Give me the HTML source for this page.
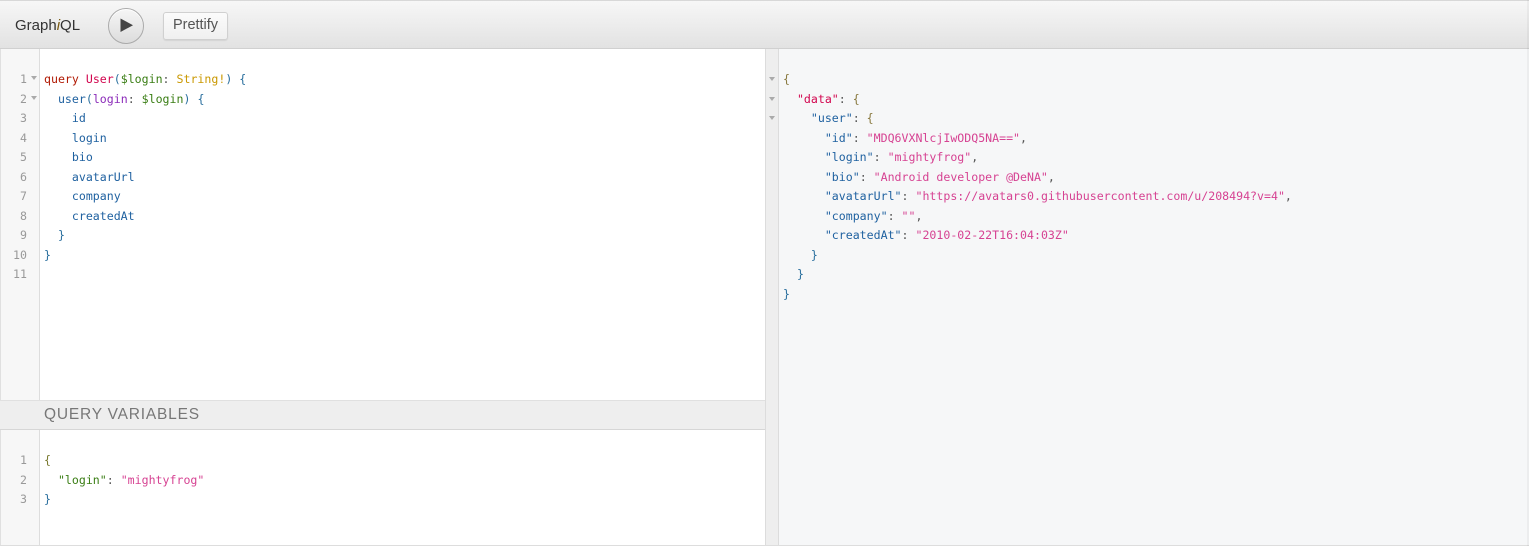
<!DOCTYPE html>
<html><head><meta charset="utf-8"><style>
html,body{margin:0;padding:0;width:1529px;height:546px;overflow:hidden;background:#fff}
body{position:relative;font-family:"DejaVu Sans Mono","Liberation Mono",monospace;font-size:11.58px}
div{position:absolute;box-sizing:border-box}
.l{white-space:pre;height:19px;line-height:19px;color:#555;margin-top:1px}
.n{color:#999;width:27px;text-align:right;height:19px;line-height:19px;left:0;margin-top:1px}
.a{width:0;height:0;border-left:3px solid transparent;border-right:3px solid transparent;border-top:4px solid #aaa}
.k{color:#b11a04}.d{color:#d2054e}.v{color:#397d13}.t{color:#ca9800}.at{color:#8b2bb9}.f{color:#1f61a0}.s{color:#d64292}.br{color:#2a6f9e}
</style></head><body>
<div style="left:0;top:0;width:1529px;height:49px;background:linear-gradient(#f7f7f7,#e2e2e2);border-top:1px solid #d8d8d8;border-bottom:1px solid #d0d0d0"></div>
<div style="left:15px;top:16px;font:15px/20px 'Liberation Sans',sans-serif;color:#333">Graph<i style="font-style:italic;color:#7a5a10">i</i>QL</div>
<div style="left:108px;top:8px;width:36px;height:36px;border-radius:50%;background:linear-gradient(#f6f6f6,#dcdcdc);border:1px solid #aaa;box-shadow:0 1px 0 #fff inset"></div>
<svg style="position:absolute;left:120px;top:18px" width="14" height="15"><path d="M0.5 0.5L13 7.2L0.5 14Z" fill="#444"/></svg>
<div style="left:163px;top:12px;width:65px;height:28px;background:linear-gradient(#fbfbfb,#f0f0f0);border:1px solid #d0d0d0;border-radius:3px;box-shadow:0 1px 1px rgba(0,0,0,.08);font:14.5px/25px 'Liberation Sans',sans-serif;color:#555;text-align:center">Prettify</div>

<div style="left:0;top:49px;width:40px;height:497px;background:#f7f7f7;border-left:1px solid #e0e0e0;border-right:1px solid #ddd"></div>

<div class="n" style="top:69px">1</div><div class="a" style="left:31px;top:76px"></div>
<div class="n" style="top:89px">2</div><div class="a" style="left:31px;top:96px"></div>
<div class="n" style="top:108px">3</div>
<div class="n" style="top:128px">4</div>
<div class="n" style="top:147px">5</div>
<div class="n" style="top:167px">6</div>
<div class="n" style="top:186px">7</div>
<div class="n" style="top:206px">8</div>
<div class="n" style="top:225px">9</div>
<div class="n" style="top:245px">10</div>
<div class="n" style="top:264px">11</div>

<div class="l" style="left:44px;top:69px"><span class="k">query</span> <span class="d">User</span><span class="br">(</span><span class="v">$login</span>: <span class="t">String</span><span class="t">!</span><span class="br">)</span> <span class="br">{</span></div>
<div class="l" style="left:44px;top:89px">  <span class="f">user</span><span class="br">(</span><span class="at">login</span>: <span class="v">$login</span><span class="br">)</span> <span class="br">{</span></div>
<div class="l" style="left:44px;top:108px;color:#1f61a0">    id</div>
<div class="l" style="left:44px;top:128px;color:#1f61a0">    login</div>
<div class="l" style="left:44px;top:147px;color:#1f61a0">    bio</div>
<div class="l" style="left:44px;top:167px;color:#1f61a0">    avatarUrl</div>
<div class="l" style="left:44px;top:186px;color:#1f61a0">    company</div>
<div class="l" style="left:44px;top:206px;color:#1f61a0">    createdAt</div>
<div class="l" style="left:44px;top:225px;color:#2a6f9e">  }</div>
<div class="l" style="left:44px;top:245px;color:#2a6f9e">}</div>

<div style="left:0;top:400px;width:766px;height:30px;background:#eeeeee;border-top:1px solid #e0e0e0;border-bottom:1px solid #d6d6d6;font:15.5px/27px 'Liberation Sans',sans-serif;letter-spacing:.8px;color:#777;padding-left:44px">QUERY VARIABLES</div>

<div class="n" style="top:450px">1</div>
<div class="n" style="top:470px">2</div>
<div class="n" style="top:489px">3</div>
<div class="l" style="left:44px;top:450px"><span style="color:#7a7a30">{</span></div>
<div class="l" style="left:44px;top:470px">  <span class="v">"login"</span>: <span class="s">"mightyfrog"</span></div>
<div class="l" style="left:44px;top:489px;color:#2a6f9e">}</div>

<div style="left:765px;top:49px;width:14px;height:497px;background:#eeeeee;border-left:1px solid #dcdcdc;border-right:1px solid #dcdcdc"></div>
<div style="left:779px;top:49px;width:750px;height:497px;background:#f6f7f8"></div>
<div style="left:0;top:545px;width:1529px;height:1px;background:#ddd"></div>
<div style="left:1527px;top:0;width:2px;height:546px;background:rgba(0,0,0,.04)"></div>

<div class="a" style="left:769px;top:77px"></div>
<div class="a" style="left:769px;top:97px"></div>
<div class="a" style="left:769px;top:116px"></div>

<div class="l" style="left:783px;top:69px;color:#8a7a40">{</div>
<div class="l" style="left:783px;top:89px">  <span class="d">"data"</span>: <span style="color:#8a7a40">{</span></div>
<div class="l" style="left:783px;top:108px">    <span class="f">"user"</span>: <span style="color:#8a7a40">{</span></div>
<div class="l" style="left:783px;top:128px">      <span class="f">"id"</span>: <span class="s">"MDQ6VXNlcjIwODQ5NA=="</span>,</div>
<div class="l" style="left:783px;top:147px">      <span class="f">"login"</span>: <span class="s">"mightyfrog"</span>,</div>
<div class="l" style="left:783px;top:167px">      <span class="f">"bio"</span>: <span class="s">"Android developer @DeNA"</span>,</div>
<div class="l" style="left:783px;top:186px">      <span class="f">"avatarUrl"</span>: <span class="s">"https://avatars0.githubusercontent.com/u/208494?v=4"</span>,</div>
<div class="l" style="left:783px;top:206px">      <span class="f">"company"</span>: <span class="s">""</span>,</div>
<div class="l" style="left:783px;top:225px">      <span class="f">"createdAt"</span>: <span class="s">"2010-02-22T16:04:03Z"</span></div>
<div class="l" style="left:783px;top:245px;color:#2a6f9e">    }</div>
<div class="l" style="left:783px;top:264px;color:#2a6f9e">  }</div>
<div class="l" style="left:783px;top:284px;color:#2a6f9e">}</div>
</body></html>
